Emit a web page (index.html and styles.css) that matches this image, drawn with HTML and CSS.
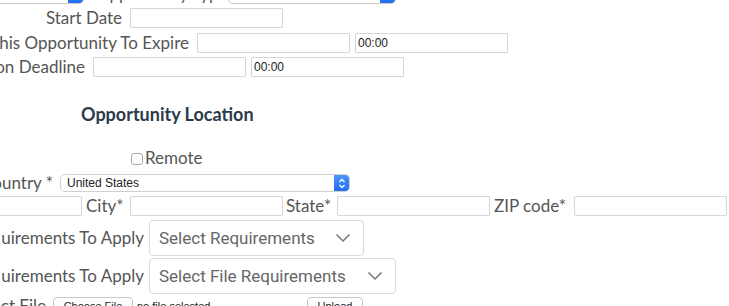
FILE: index.html
```html
<!DOCTYPE html>
<html lang="en">
<head>
  <meta charset="UTF-8">
  <title>Opportunity Form</title>
  <link rel="stylesheet" href="styles.css">
</head>
<body>

  <div class="form">
    <div class="row row-type">
      <div class="mac-select sel-a"><span class="sel-text"></span><span class="sel-arrow"></span></div>
      <label class="lbl lbl-type">Opportunity Type</label>
      <div class="mac-select sel-b"><span class="sel-text"></span><span class="sel-arrow"></span></div>
    </div>

    <div class="row row-start">
      <label class="lbl w-start">Start Date</label>
      <input class="field" type="text">
    </div>

    <div class="row row-expire">
      <label class="lbl w-expire">his Opportunity To Expire</label>
      <input class="field" type="text">
      <input class="field time" type="text" value="00:00">
    </div>

    <div class="row row-deadline">
      <label class="lbl w-deadline">on Deadline</label>
      <input class="field" type="text">
      <input class="field time" type="text" value="00:00">
    </div>

    <h3 class="section-title">Opportunity Location</h3>

    <div class="row row-remote">
      <span class="checkbox"></span>
      <label class="lbl">Remote</label>
    </div>

    <div class="row row-country">
      <label class="lbl w-country">ountry *</label>
      <div class="mac-select sel-country">
        <span class="sel-text">United States</span>
        <span class="sel-arrow">
          <svg width="8" height="11" viewBox="0 0 8 11"><path d="M1.5 4 L4 1.5 L6.5 4 M1.5 7 L4 9.5 L6.5 7" fill="none" stroke="#fff" stroke-width="1.3"/></svg>
        </span>
      </div>
    </div>

    <div class="row row-city">
      <input class="field addr-first" type="text">
      <label class="lbl w-city">City*</label>
      <input class="field" type="text">
      <label class="lbl w-state">State*</label>
      <input class="field" type="text">
      <label class="lbl w-zip">ZIP code*</label>
      <input class="field" type="text">
    </div>

    <div class="row row-req">
      <label class="lbl w-req">uirements To Apply</label>
      <div class="multi-select req-a">
        <span>Select Requirements</span>
        <svg class="chev" width="16" height="10" viewBox="0 0 16 10"><path d="M1.5 1.5 L8 8 L14.5 1.5" fill="none" stroke="#777" stroke-width="1.5"/></svg>
      </div>
    </div>

    <div class="row row-req">
      <label class="lbl w-req">uirements To Apply</label>
      <div class="multi-select req-b">
        <span>Select File Requirements</span>
        <svg class="chev" width="16" height="10" viewBox="0 0 16 10"><path d="M1.5 1.5 L8 8 L14.5 1.5" fill="none" stroke="#777" stroke-width="1.5"/></svg>
      </div>
    </div>

    <div class="row row-file">
      <label class="lbl w-file">ct File</label>
      <button class="small-btn choose">Choose File</button>
      <span class="no-file">no file selected</span>
      <button class="small-btn upload">Upload</button>
    </div>
  </div>

</body>
</html>
```

FILE: styles.css
```css
body {
  margin: 0;
  padding: 0;
  background: #fff;
  font-family: 'Lato', 'Open Sans', sans-serif;
  color: #555;
  overflow: hidden;
  width: 729px;
  height: 306px;
}
.form {
  width: 729px;
}
.row {
  display: flex;
  align-items: center;
  white-space: nowrap;
}
.lbl {
  font-size: 17px;
  color: #555;
  line-height: 20px;
  flex: none;
}
/* fixed-width labels, text pushed to the right edge */
.w-start, .w-expire, .w-deadline, .w-country, .w-req, .w-file,
.w-city, .w-state, .w-zip {
  display: flex;
  justify-content: flex-end;
}
.w-start { width: 122px; margin-right: 8px; }
.w-expire { width: 189px; margin-right: 8px; }
.w-deadline { width: 85px; margin-right: 8px; }
.w-country { width: 53px; margin-right: 7px; }
.w-req { width: 144px; margin-right: 5px; }
.w-file { width: 46px; margin-right: 7px; }
.w-city { width: 44px; margin-left: 4px; justify-content: flex-start; }
.w-state { width: 51px; margin-left: 3px; justify-content: flex-start; }
.w-zip { width: 80px; margin-left: 4px; justify-content: flex-start; }

.field {
  box-sizing: border-box;
  flex: none;
  width: 153px;
  height: 20px;
  border: 1px solid #d6d6d6;
  border-radius: 1px;
  padding: 0 2px;
  font-family: 'Liberation Sans', sans-serif;
  font-size: 12px;
  color: #222;
  background: #fff;
  outline: none;
}

/* cut off top row */
.row-type {
  height: 20px;
  margin-top: -16px;
}
.mac-select {
  box-sizing: border-box;
  flex: none;
  height: 20px;
  display: flex;
  align-items: center;
  justify-content: space-between;
  border: 1px solid #c9c9c9;
  border-radius: 5px;
  background: #fff;
  overflow: hidden;
}
.sel-text {
  padding-left: 6px;
  font-family: 'Liberation Sans', sans-serif;
  font-size: 12px;
  color: #222;
}
.sel-arrow {
  width: 15px;
  height: 100%;
  background: linear-gradient(#4c94fb, #1f6ff2);
  display: flex;
  align-items: center;
  justify-content: center;
}
.sel-a {
  width: 100px;
  margin-left: -16px;
}
.lbl-type {
  margin-left: 12px;
  width: 132px;
}
.sel-b {
  width: 168px;
}

.row-start {
  margin-top: 4px;
  height: 20px;
}
.row-expire {
  margin-top: 5px;
  height: 20px;
}
.row-deadline {
  margin-top: 4px;
  height: 20px;
}
.time {
  margin-left: 5px;
}

.section-title {
  margin: 27px 0 0 81px;
  font-size: 18px;
  line-height: 20px;
  font-weight: 700;
  color: #2c3a4b;
}

.row-remote {
  margin-top: 25px;
  padding-left: 131px;
  height: 18px;
}
.checkbox {
  box-sizing: border-box;
  width: 12px;
  height: 12px;
  border: 1px solid #a9a9a9;
  border-radius: 3px;
  margin-right: 2px;
  margin-top: 2px;
}
.row-country {
  margin-top: 7px;
  height: 18px;
}
.sel-country {
  width: 290px;
  height: 18px;
  border-color: #d0d0d0;
}

.row-city {
  margin-top: 4px;
  height: 20px;
}
.addr-first {
  margin-left: -71px;
}

.row-req {
  margin-top: 4px;
  height: 36px;
}
.row-req + .row-req { margin-top: 2px; }
.multi-select {
  box-sizing: border-box;
  flex: none;
  height: 36px;
  display: flex;
  align-items: center;
  justify-content: space-between;
  padding: 0 12px 0 9px;
  border: 1px solid #dadada;
  border-radius: 4px;
  font-family: 'Roboto', sans-serif;
  font-size: 17px;
  color: #666;
}
.req-a { width: 215px; }
.req-b { width: 247px; }

.row-file {
  margin-top: 2px;
  height: 20px;
}
.small-btn {
  box-sizing: border-box;
  flex: none;
  height: 18px;
  padding: 0 8px;
  border: 1px solid #c6c6c6;
  border-radius: 4px;
  background: #fff;
  font-family: 'Liberation Sans', sans-serif;
  font-size: 11px;
  color: #222;
}
.choose { width: 80px; }
.no-file {
  flex: none;
  margin-left: 4px;
  font-family: 'Liberation Sans', sans-serif;
  font-size: 11px;
  color: #222;
  width: 170px;
}
.upload { width: 56px; }
```
